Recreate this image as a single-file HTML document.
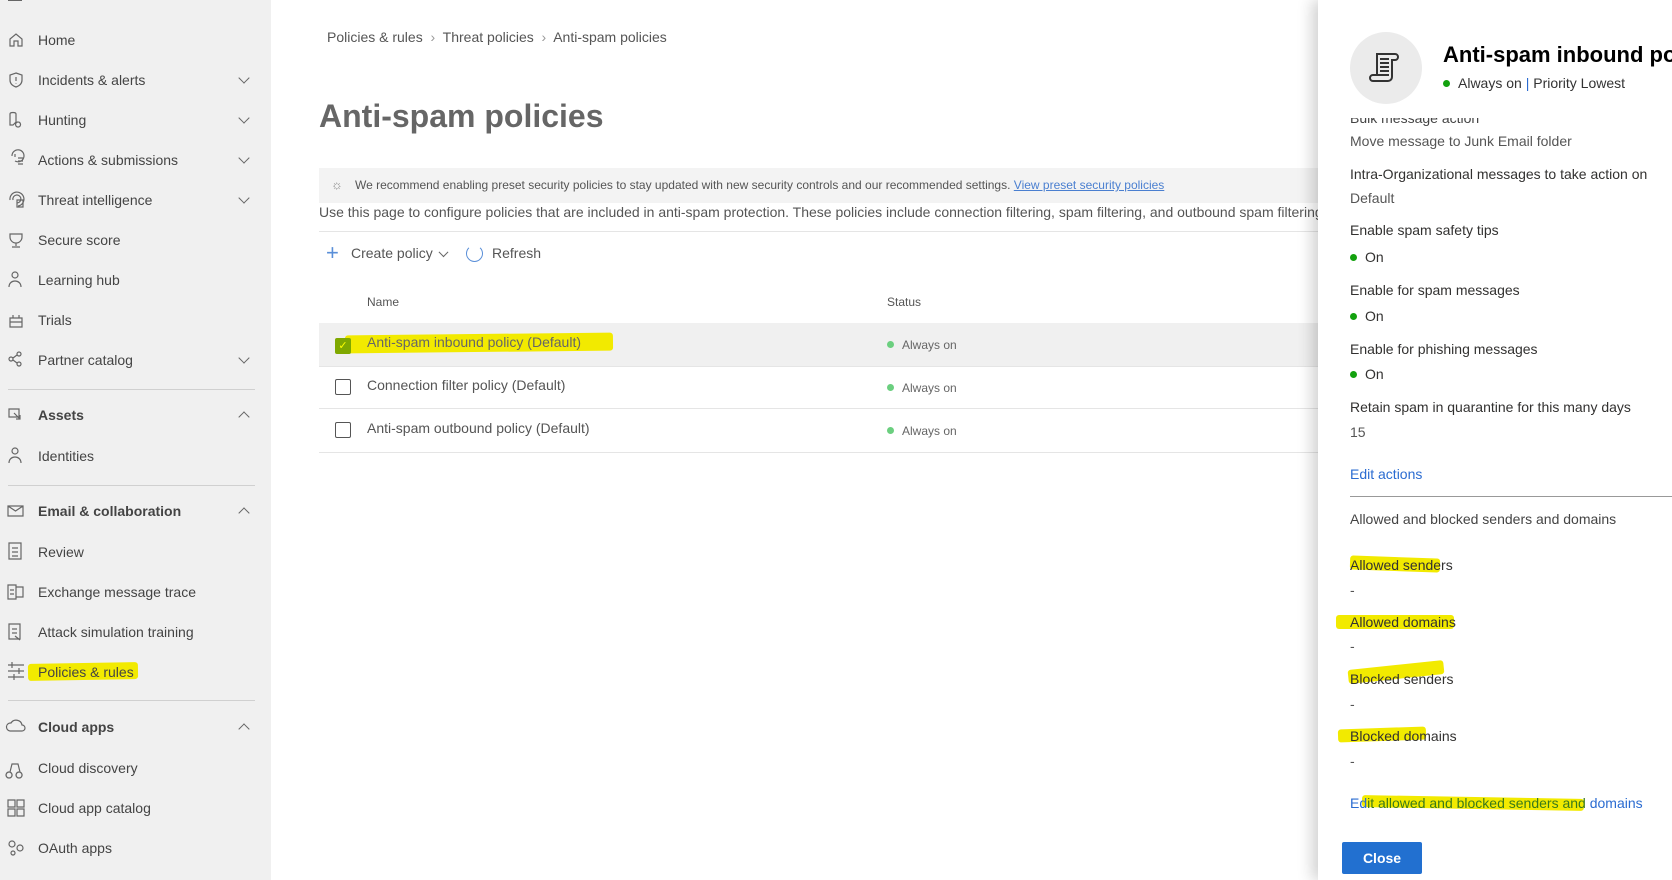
<!DOCTYPE html>
<html><head><meta charset="utf-8"><style>
*{margin:0;padding:0;box-sizing:border-box}
body{width:1672px;height:880px;position:relative;overflow:hidden;background:#fff;font-family:"Liberation Sans",sans-serif;color:#323130;font-size:14px}
.a{position:absolute;white-space:nowrap}
.side{position:absolute;left:0;top:0;width:271px;height:880px;background:#f0f0f0}
.ni{position:absolute;left:38px;font-size:14px;color:#444;transform:translateY(-50%)}
.ic{position:absolute;left:8px;width:16px;height:16px;transform:translateY(-50%)}
.ch{position:absolute;left:240px;width:8px;height:8px;border-right:1.3px solid #666;border-bottom:1.3px solid #666}
.dn{transform:translateY(-75%) rotate(45deg)}
.up{transform:translateY(-25%) rotate(-135deg)}
.dv{position:absolute;left:8px;width:247px;height:1px;background:#d0d0d0}
.hl{position:absolute;background:#f2ea00;border-radius:3px}
.p{position:absolute;left:1350px;font-size:14px;transform:translateY(-50%);white-space:nowrap}
.dot{display:inline-block;width:7px;height:7px;border-radius:50%;background:#13a10e;margin-right:8px;vertical-align:1px}
.gd{display:inline-block;width:7px;height:7px;border-radius:50%;background:#6bcf7f;margin-right:8px;vertical-align:1px}
.cb{position:absolute;left:335px;width:16px;height:16px;border:1.3px solid #555;border-radius:2px;transform:translateY(-50%)}
</style></head><body>
<div class="side">
<div class="a" style="left:8px;top:0;width:14px;height:1px;background:#666"></div>
</div>
<svg class="a" style="left:0;top:0" width="271" height="880" fill="none" stroke="#666" stroke-width="1.2">
<path d="M10 46v-7l6-5 6 5v7h-4v-5h-4v5z"/>
<path d="M16 73l6 2v5c0 4-3 6-6 7-3-1-6-3-6-7v-5z M16 77v4 M16 83v.5"/>
<path d="M10 114c0-2 6-2 6 0v8l-3 3h-3z M18 122a2.5 2.5 0 1 0 .1 0"/>
<path d="M12 156a6 6 0 1 1 3 5 M15 154v3 M18 158h5 M18 161h5 M18 164h5"/>
<path d="M10 200a7 7 0 1 1 8 6 M13 200a4 4 0 1 1 4 3 M17 200h6v7h-6z"/>
<path d="M10 234h12v3a6 6 0 0 1-12 0z M16 243v3 M12 247h8"/>
<circle cx="15" cy="275" r="3"/><path d="M9 287c0-4 3-6 6-6s6 2 6 6"/>
<path d="M10 318h12v9h-12z M13 318v-3 M19 318v-3 M10 322h12"/>
<circle cx="11" cy="359" r="2"/><circle cx="19" cy="354" r="2"/><circle cx="19" cy="364" r="2"/><path d="M13 358l4-3 M13 360l4 3"/>
<path d="M9 409h10v8h-10z M14 413l6 6 M20 415v4h-4"/>
<circle cx="15" cy="451" r="3"/><path d="M9 463c0-4 3-6 6-6s6 2 6 6"/>
<path d="M8 506h15v10h-15z M8 506l7.5 5 7.5-5"/>
<path d="M9 543h12v16h-12z M12 548h6 M12 552h6 M12 556h6"/>
<path d="M8 585h8v14h-8z M16 587h7v10h-7 M10 590h4 M10 594h4"/>
<path d="M9 624h11v15h-11z M12 629h5 M12 633h5 M15 636l5 4"/>
<path d="M8 665h16 M8 671h16 M8 677h16 M12 662v6 M19 668v6 M14 674v6"/>
<path d="M10 731a4 4 0 0 1 1-8 6 6 0 0 1 11 2 3 3 0 0 1 0 6z"/>
<path d="M9 772a3 3 0 1 0 .1 0 M19 772a3 3 0 1 0 .1 0 M10 772l2-8h6l2 8"/>
<path d="M8 800h7v7h-7z M17 800h7v7h-7z M8 809h7v7h-7z M17 809h7v7h-7z"/>
<circle cx="12" cy="844" r="3"/><circle cx="20" cy="848" r="3"/><circle cx="13" cy="853" r="2"/>
</svg>
<div class="ni" style="top:40px">Home</div>
<div class="ni" style="top:80px">Incidents &amp; alerts</div><div class="ch dn" style="top:80px"></div>
<div class="ni" style="top:120px">Hunting</div><div class="ch dn" style="top:120px"></div>
<div class="ni" style="top:160px">Actions &amp; submissions</div><div class="ch dn" style="top:160px"></div>
<div class="ni" style="top:200px">Threat intelligence</div><div class="ch dn" style="top:200px"></div>
<div class="ni" style="top:240px">Secure score</div>
<div class="ni" style="top:280px">Learning hub</div>
<div class="ni" style="top:320px">Trials</div>
<div class="ni" style="top:360px">Partner catalog</div><div class="ch dn" style="top:360px"></div>
<div class="dv" style="top:389px"></div>
<div class="ni" style="top:415px;font-weight:bold;color:#444">Assets</div><div class="ch up" style="top:415px"></div>
<div class="ni" style="top:456px">Identities</div>
<div class="dv" style="top:485px"></div>
<div class="ni" style="top:511px;font-weight:bold;color:#444">Email &amp; collaboration</div><div class="ch up" style="top:511px"></div>
<div class="ni" style="top:552px">Review</div>
<div class="ni" style="top:592px">Exchange message trace</div>
<div class="ni" style="top:632px">Attack simulation training</div>
<div class="hl" style="left:28px;top:663px;width:110px;height:17px;transform:rotate(-1deg)"></div>
<div class="ni" style="top:672px">Policies &amp; rules</div>
<div class="dv" style="top:700px"></div>
<div class="ni" style="top:727px;font-weight:bold;color:#444">Cloud apps</div><div class="ch up" style="top:727px"></div>
<div class="ni" style="top:768px">Cloud discovery</div>
<div class="ni" style="top:808px">Cloud app catalog</div>
<div class="ni" style="top:848px">OAuth apps</div>

<div class="a" style="left:327px;top:29px;font-size:14px;color:#555">Policies &amp; rules &nbsp;<span style="color:#999">›</span>&nbsp; Threat policies &nbsp;<span style="color:#999">›</span>&nbsp; Anti-spam policies</div>
<div class="a" style="left:319px;top:98px;font-size:32px;font-weight:bold;color:#666">Anti-spam policies</div>
<div class="a" style="left:319px;top:168px;width:1000px;height:35px;background:#f3f3f3"></div>
<div class="a" style="left:331px;top:177px;font-size:13px;color:#888">☼</div>
<div class="a" style="left:355px;top:178px;font-size:12px;color:#555">We recommend enabling preset security policies to stay updated with new security controls and our recommended settings. <span style="color:#4a7fd0;text-decoration:underline">View preset security policies</span></div>
<div class="a" style="left:319px;top:204px;font-size:14px;color:#555">Use this page to configure policies that are included in anti-spam protection. These policies include connection filtering, spam filtering, and outbound spam filtering.</div>
<div class="a" style="left:319px;top:231px;width:1000px;height:1px;background:#e5e5e5"></div>
<div class="a" style="left:326px;top:243px;font-size:22px;color:#5a8fd8;font-weight:300;line-height:20px">+</div>
<div class="a" style="left:351px;top:245px;font-size:14px;color:#555">Create policy</div>
<div class="ch dn" style="left:440px;top:254px;position:absolute;width:7px;height:7px"></div>
<div class="a" style="left:466px;top:245px;width:17px;height:17px;border:1.3px solid #5a8fd8;border-radius:50%;border-top-color:transparent"></div>
<div class="a" style="left:492px;top:245px;font-size:14px;color:#555">Refresh</div>
<div class="a" style="left:367px;top:295px;font-size:12px;color:#555">Name</div>
<div class="a" style="left:887px;top:295px;font-size:12px;color:#555">Status</div>
<div class="a" style="left:319px;top:323px;width:1000px;height:43px;background:#f0f0f0"></div>
<div class="a" style="left:319px;top:366px;width:1000px;height:1px;background:#e5e5e5"></div>
<div class="a" style="left:319px;top:408px;width:1000px;height:1px;background:#e5e5e5"></div>
<div class="a" style="left:319px;top:452px;width:1000px;height:1px;background:#e5e5e5"></div>
<div class="hl" style="left:345px;top:334px;width:268px;height:18px;transform:rotate(-0.6deg)"></div>
<div class="a" style="left:335px;top:338px;width:16px;height:16px;background:#7fa800;border-radius:2px;color:#ff0;font-size:11px;text-align:center;line-height:16px">✓</div>
<div class="a" style="left:367px;top:334px;font-size:14px;color:#666">Anti-spam inbound policy (Default)</div>
<div class="cb" style="top:387px"></div>
<div class="a" style="left:367px;top:377px;font-size:14px;color:#555">Connection filter policy (Default)</div>
<div class="cb" style="top:430px"></div>
<div class="a" style="left:367px;top:420px;font-size:14px;color:#555">Anti-spam outbound policy (Default)</div>
<div class="a" style="left:887px;top:338px;font-size:12px;color:#666"><span class="gd"></span>Always on</div>
<div class="a" style="left:887px;top:381px;font-size:12px;color:#666"><span class="gd"></span>Always on</div>
<div class="a" style="left:887px;top:424px;font-size:12px;color:#666"><span class="gd"></span>Always on</div>

<div class="a" style="left:1318px;top:0;width:354px;height:880px;background:#fff;box-shadow:-6px 0 14px rgba(0,0,0,.18)"></div>
<div class="p" style="top:118px;color:#444;font-size:14px;clip-path:inset(50% 0 0 0)">Bulk message action</div>
<div class="a" style="left:1318px;top:0;width:354px;height:112px;background:#fff"></div>
<div class="a" style="left:1350px;top:32px;width:72px;height:72px;border-radius:50%;background:#ebebeb"></div>
<svg class="a" style="left:1368px;top:50px" width="36" height="36" fill="none" stroke="#333" stroke-width="2"><path d="M9 4h18a3 3 0 0 1 0 6h-3v17a4 4 0 0 1-4 4H5a3 3 0 0 1 0-6h4z M9 25h12 M12 9h9 M12 13h9 M12 17h9 M12 21h9"/></svg>
<div class="a" style="left:1443px;top:42px;font-size:22px;font-weight:bold;color:#000">Anti-spam inbound policy</div>
<div class="a" style="left:1443px;top:75px;font-size:14px;color:#333"><span class="dot"></span>Always on <span style="color:#2b6cd1">|</span> Priority Lowest</div>
<div class="p" style="top:141px;color:#555">Move message to Junk Email folder</div>
<div class="p" style="top:174px">Intra-Organizational messages to take action on</div>
<div class="p" style="top:198px;color:#555">Default</div>
<div class="p" style="top:230px">Enable spam safety tips</div>
<div class="p" style="top:257px"><span class="dot"></span>On</div>
<div class="p" style="top:290px">Enable for spam messages</div>
<div class="p" style="top:316px"><span class="dot"></span>On</div>
<div class="p" style="top:349px">Enable for phishing messages</div>
<div class="p" style="top:374px"><span class="dot"></span>On</div>
<div class="p" style="top:407px">Retain spam in quarantine for this many days</div>
<div class="p" style="top:432px;color:#555">15</div>
<div class="p" style="top:474px;color:#2b6cd1">Edit actions</div>
<div class="a" style="left:1350px;top:496px;width:322px;height:1px;background:#999"></div>
<div class="p" style="top:519px;color:#444">Allowed and blocked senders and domains</div>
<div class="hl" style="left:1350px;top:557px;width:90px;height:14px;transform:rotate(2deg)"></div>
<div class="hl" style="left:1336px;top:615px;width:118px;height:14px"></div>
<div class="hl" style="left:1348px;top:665px;width:96px;height:14px;transform:rotate(-6deg)"></div>
<div class="hl" style="left:1338px;top:728px;width:88px;height:13px;transform:rotate(-2deg)"></div>
<div class="hl" style="left:1362px;top:797px;width:222px;height:12px;transform:rotate(1deg)"></div>
<div class="p" style="top:565px">Allowed senders</div>
<div class="p" style="top:590px;color:#555">-</div>
<div class="p" style="top:622px">Allowed domains</div>
<div class="p" style="top:646px;color:#555">-</div>
<div class="p" style="top:679px">Blocked senders</div>
<div class="p" style="top:704px;color:#555">-</div>
<div class="p" style="top:736px">Blocked domains</div>
<div class="p" style="top:761px;color:#555">-</div>
<div class="p" style="top:803px;color:#2b6cd1">Ed<span style="color:#3a7a1a">it allowed and blocked senders and</span> domains</div>
<div class="a" style="left:1342px;top:842px;width:80px;height:32px;background:#2270d0;border-radius:2px;color:#fff;font-weight:bold;font-size:14px;text-align:center;line-height:32px">Close</div>
</body></html>
